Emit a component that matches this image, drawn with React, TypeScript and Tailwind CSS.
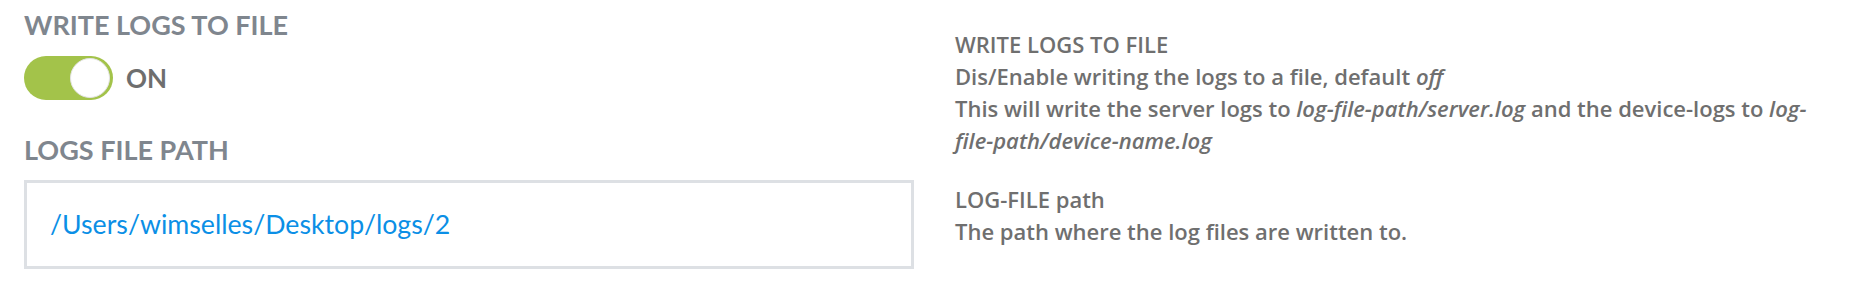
export default function App() {
  return (
    <div className="flex h-[290px] w-[1858px] bg-white font-['Lato',sans-serif]">
      <div className="ml-[24px] flex w-[890px] flex-col pt-[8px]">
        <div className="text-[27px] leading-[34px] font-bold text-[#7f868e]">WRITE LOGS TO FILE</div>
        <div className="mt-[14px] flex items-center gap-[13px]">
          <div className="flex h-[44px] w-[89px] items-center justify-end rounded-full bg-[#a3c34a] pr-[3px]">
            <div className="h-[40px] w-[40px] rounded-full border border-[#e4e4e4] bg-white" />
          </div>
          <span className="text-[26px] font-bold text-[#6e6e6e]">ON</span>
        </div>
        <div className="mt-[33px] text-[27px] leading-[34px] font-bold text-[#7f868e]">LOGS FILE PATH</div>
        <div className="mt-[13px] flex h-[89px] items-center border-[3px] border-[#dde0e4] px-[23px]">
          <span className="text-[26.7px] text-[#0b8fe6]">/Users/wimselles/Desktop/logs/2</span>
        </div>
      </div>
      <div className="ml-[41px] flex w-[895px] flex-col pt-[28px] font-['Open_Sans',sans-serif] text-[22px] leading-[32px] font-semibold text-[#6f6f6f]">
        <div>WRITE LOGS TO FILE</div>
        <div>
          Dis/Enable writing the logs to a file, default <i>off</i>
        </div>
        <div>
          This will write the server logs to <i>log-file-path/server.log</i> and the device-logs to{" "}
          <i>
            log-
            <br />
            file-path/device-name.log
          </i>
        </div>
        <div className="mt-[27px]">LOG-FILE path</div>
        <div>The path where the log files are written to.</div>
      </div>
    </div>
  );
}
